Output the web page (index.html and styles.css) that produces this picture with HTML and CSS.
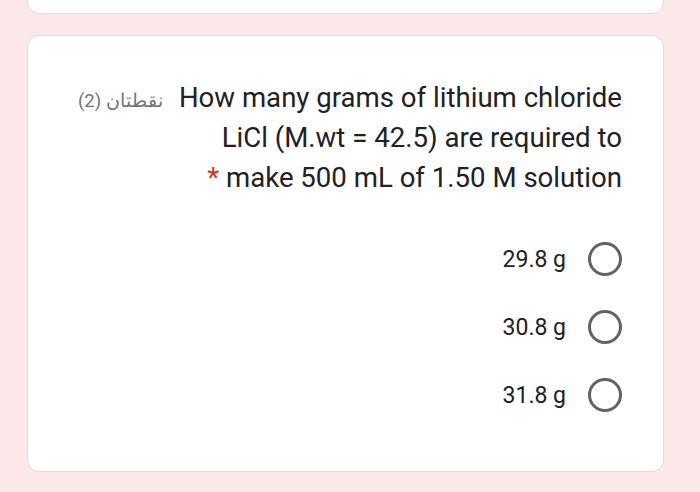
FILE: index.html
```html
<!DOCTYPE html>
<html lang="en">
<head>
<meta charset="utf-8">
<link rel="stylesheet" href="styles.css">
</head>
<body>
<div class="stack">
  <div class="card card-prev"></div>
  <div class="card card-q">
    <div class="q-head">
      <div class="points">(2) نقطتان</div>
      <div class="q-text">How many grams of lithium chloride<br>LiCl (M.wt = 42.5) are required to<br><span class="req">*</span> make 500 mL of 1.50 M solution</div>
    </div>
    <div class="options">
      <div class="opt"><span class="opt-label">29.8 g</span><span class="radio"></span></div>
      <div class="opt"><span class="opt-label">30.8 g</span><span class="radio"></span></div>
      <div class="opt"><span class="opt-label">31.8 g</span><span class="radio"></span></div>
    </div>
  </div>
</div>
</body>
</html>
```
FILE: styles.css
```css
html, body {
  margin: 0;
  padding: 0;
  background: #fde8e9;
  font-family: Roboto, "Noto Sans", sans-serif;
  color: #202124;
}
.stack {
  display: flex;
  flex-direction: column;
  gap: 21px;
  padding: 0 36px 0 27px;
  margin-top: -86px;
}
.card {
  background: #fff;
  border: 1.5px solid #e3dada;
  border-radius: 12px;
  box-sizing: border-box;
}
.card-prev {
  height: 100px;
}
.card-q {
  height: 437px;
  padding: 42px 41px 0 50px;
  display: flex;
  flex-direction: column;
}
.q-head {
  display: flex;
  align-items: flex-start;
}
.points {
  font-size: 18.5px;
  line-height: 40px;
  padding-top: 3px;
  color: #70757a;
  white-space: nowrap;
  direction: ltr;
}
.q-text {
  flex: 1;
  text-align: right;
  font-size: 27.6px;
  line-height: 40px;
}
.req {
  color: #d93025;
}
.options {
  display: flex;
  flex-direction: column;
  align-items: flex-end;
  margin-top: 44px;
  gap: 34px;
}
.opt {
  display: flex;
  align-items: center;
  gap: 22px;
  height: 34px;
}
.opt-label {
  font-size: 23px;
}
.radio {
  width: 34px;
  height: 34px;
  box-sizing: border-box;
  border: 3px solid #5f6368;
  border-radius: 50%;
}
```
